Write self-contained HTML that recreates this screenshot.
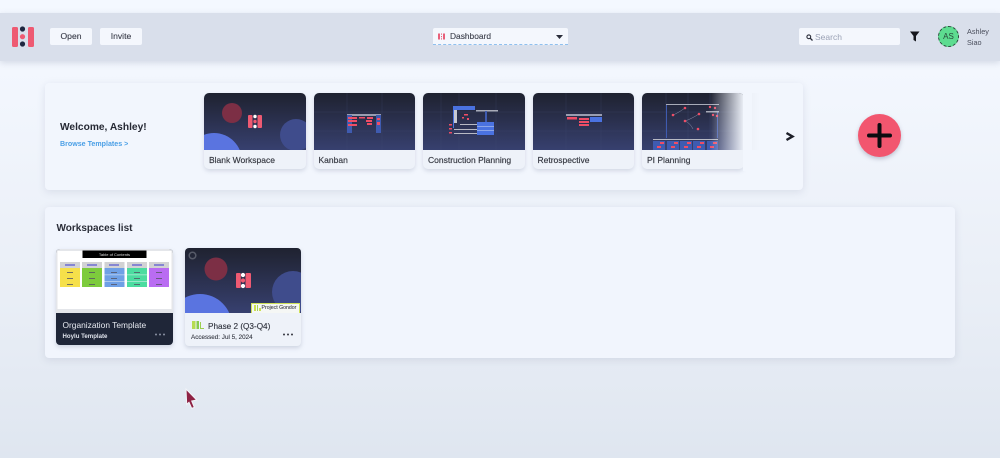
<!DOCTYPE html>
<html><head><meta charset="utf-8"><style>
*{box-sizing:border-box}
html,body{margin:0;padding:0}
body{width:1000px;height:458px;position:relative;overflow:hidden;font-family:"Liberation Sans",sans-serif;color:#2a2d3a;background:linear-gradient(180deg,#f4f8ff 0,#f3f7fe 70px,#e9eef6 300px,#dfe6f0 458px)}
#w{position:absolute;left:0;top:0;width:1000px;height:458px;filter:blur(.35px)}
.a{position:absolute}
.bar{left:0;top:13px;width:1000px;height:48px;background:#d9dfeb;box-shadow:0 2px 6px rgba(120,130,160,.25)}
.btn{top:28px;height:17px;background:#f4f7fd;border-radius:2px;font-size:8.6px;line-height:17px;text-align:center;color:#3a3d4a;-webkit-text-stroke:.12px #3a3d4a}
.panel{background:#f2f6fd;border-radius:4px;box-shadow:0 2px 8px rgba(120,130,160,.18)}
.card{top:93px;width:101.5px;height:76px;border-radius:5px;background:#eef2f9;box-shadow:0 2px 4px rgba(100,110,140,.22);overflow:hidden}
.card svg{position:absolute;left:0;top:0}
.card span{position:absolute;left:5px;top:61px;font-size:8.5px;line-height:12px;color:#33363f;white-space:nowrap;-webkit-text-stroke:.15px #33363f}
</style></head><body><div id="w">
<div class="a bar"></div>

<svg class="a" style="left:11px;top:25px" width="26" height="24" viewBox="0 0 26 24">
<rect x="1" y="2" width="6" height="20" rx="1.500" fill="#ee5a72"/><rect x="17" y="2" width="6" height="20" rx="1.500" fill="#ee5a72"/>
<circle cx="11.500" cy="4" r="2.600" fill="#1f2740"/><circle cx="11.500" cy="11.700" r="2.600" fill="#ee5a72"/><circle cx="11.500" cy="19" r="2.600" fill="#1f2740"/>
</svg>
<div class="a btn" style="left:50px;width:42px">Open</div>
<div class="a btn" style="left:100px;width:42px">Invite</div>

<div class="a" style="left:433px;top:28px;width:135px;height:17px;background:#f4f7fd;border-radius:2px 2px 0 0;border-bottom:1px dashed #8fc0ee;font-size:8.4px;line-height:16px;color:#3d404d;padding-left:17px;-webkit-text-stroke:.12px #3d404d">Dashboard</div>
<svg class="a" style="left:438px;top:33px" width="7" height="7" viewBox="0 0 7 7"><rect x="0" y="0.500" width="2" height="6" fill="#e8607a"/><rect x="5" y="0.500" width="2" height="6" fill="#e8607a"/><rect x="3" y="0.500" width="1" height="1.200" fill="#e8607a"/><rect x="3" y="3" width="1" height="1.200" fill="#e8607a"/><rect x="3" y="5.300" width="1" height="1.200" fill="#e8607a"/></svg>
<svg class="a" style="left:556px;top:35px" width="7" height="4"><path d="M0 0H7L3.500 4Z" fill="#2a2d3a"/></svg>

<div class="a" style="left:799px;top:28px;width:101px;height:17px;background:#f4f7fd;border-radius:2px;font-size:8.500px;line-height:18px;color:#9aa1b5;padding-left:16px">Search</div>
<svg class="a" style="left:806px;top:33.500px" width="7" height="7" viewBox="0 0 7 7"><circle cx="2.800" cy="2.800" r="1.900" fill="none" stroke="#2a2d3a" stroke-width="1.100"/><path d="M4.200 4.200L6.500 6.500" stroke="#2a2d3a" stroke-width="1.300"/></svg>
<svg class="a" style="left:910px;top:31px" width="10" height="11" viewBox="0 0 10 11"><path d="M0 .5H9.500L6 5V10.500L3.500 9V5Z" fill="#15161c"/></svg>
<div class="a" style="left:938px;top:26px;width:21px;height:21px;border-radius:50%;background:#5ddc90;border:1px dashed #2a4a3c;font-size:8px;line-height:19px;text-align:center;color:#27493a">AS</div>
<div class="a" style="left:967px;top:26px;font-size:7.300px;line-height:11px;color:#4a4e5c">Ashley<br>Siao</div>

<div class="a panel" style="left:45px;top:83px;width:758px;height:107px"></div>
<div class="a" style="left:60px;top:121px;font-size:10.200px;font-weight:bold;line-height:14px;color:#262934;white-space:nowrap">Welcome, Ashley!</div>
<div class="a" style="left:60px;top:139px;font-size:7.100px;font-weight:bold;line-height:10px;color:#4a9fe6;white-space:nowrap">Browse Templates &gt;</div>

<div class="a card" style="left:204px">
<svg width="102" height="57" viewBox="0 0 102 57"><defs><linearGradient id="g" x1="0" y1="0" x2="0" y2="1"><stop offset="0" stop-color="#1f2230"/><stop offset="1" stop-color="#37406f"/></linearGradient></defs>
<rect width="102" height="57" fill="url(#g)"/>
<circle cx="28" cy="20" r="10" fill="#7c2f45"/><circle cx="92" cy="42" r="16" fill="#3f4c8c"/><circle cx="10" cy="68" r="28" fill="#5a74e0"/>
<rect x="44" y="22" width="4.500" height="13" rx="1" fill="#ee5a72"/><rect x="53.500" y="22" width="4.500" height="13" rx="1" fill="#ee5a72"/><circle cx="51" cy="23.500" r="1.700" fill="#fff"/><circle cx="51" cy="28.500" r="1.700" fill="#ee5a72"/><circle cx="51" cy="33.500" r="1.700" fill="#fff"/></svg>
<span>Blank Workspace</span></div>

<div class="a card" style="left:313.500px">
<svg width="102" height="57" viewBox="0 0 102 57"><rect width="102" height="57" fill="url(#g)"/>
<g stroke="#46507a" stroke-width=".4" opacity=".5"><path d="M33 0V57M68 0V57M0 19H102M0 38H102"/></g>
<rect x="33" y="21" width="34" height="2" fill="#999db0"/><rect x="33" y="22" width="5" height="18" fill="#3f5bb0"/><rect x="62" y="22" width="5" height="18" fill="#3f5bb0"/>
<g fill="#ee4d66"><rect x="34" y="24" width="9" height="2"/><rect x="34" y="27" width="9" height="2"/><rect x="34" y="31" width="9" height="2"/><rect x="45" y="24" width="6" height="1.500"/><rect x="53" y="24" width="6" height="2"/><rect x="52" y="27" width="6" height="2"/><rect x="53" y="30" width="5" height="2"/><rect x="63" y="25" width="3" height="2"/><rect x="63" y="29" width="3" height="3"/></g></svg>
<span>Kanban</span></div>

<div class="a card" style="left:423px">
<svg width="102" height="57" viewBox="0 0 102 57"><rect width="102" height="57" fill="url(#g)"/>
<g stroke="#46507a" stroke-width=".4" opacity=".5"><path d="M18 0V57M36 0V57M73 0V57M0 19H102M0 38H102"/></g>
<rect x="30" y="13" width="22" height="4" fill="#4a72e0"/><rect x="30" y="17" width="4" height="13" fill="#c8cad2"/><rect x="30" y="13" width="1" height="22" fill="#4a72e0"/>
<rect x="53" y="17" width="22" height="1.500" fill="#a8abb8"/><rect x="62" y="18" width="2" height="13" fill="#3f5bb0"/>
<g fill="#ee4d66"><rect x="41" y="21" width="4" height="1.500"/><rect x="39" y="24" width="2" height="1.500"/><rect x="44" y="25" width="2" height="2"/><rect x="26" y="31" width="3" height="1.500"/><rect x="26" y="35" width="3" height="1.500"/><rect x="26" y="39" width="3" height="1.500"/></g>
<rect x="37" y="31" width="27" height="1" fill="#b8bac4"/><rect x="31" y="36" width="33" height="1" fill="#b8bac4"/><rect x="31" y="40" width="33" height="1" fill="#b8bac4"/>
<rect x="54" y="29" width="17" height="13" fill="#4a72e0"/><g fill="#a9bbec"><rect x="54" y="33" width="17" height=".7"/><rect x="54" y="37" width="17" height=".7"/></g></svg>
<span>Construction Planning</span></div>

<div class="a card" style="left:532.500px">
<svg width="102" height="57" viewBox="0 0 102 57"><rect width="102" height="57" fill="url(#g)"/>
<g stroke="#46507a" stroke-width=".4" opacity=".5"><path d="M33 0V57M68 0V57M0 19H102M0 38H102"/></g>
<rect x="33" y="21" width="36" height="2" fill="#999db0"/>
<g fill="#ee4d66"><rect x="34" y="24" width="10" height="2.500"/><rect x="46" y="25" width="10" height="2"/><rect x="46" y="28" width="10" height="2"/><rect x="46" y="31" width="10" height="2"/></g>
<rect x="57" y="24" width="12" height="5" fill="#4a72e0"/></svg>
<span>Retrospective</span></div>

<div class="a card" style="left:642px">
<svg width="102" height="57" viewBox="0 0 102 57"><defs><linearGradient id="f" x1="0" x2="1" y1="0" y2="0"><stop offset="0" stop-color="#eef2f9" stop-opacity="0"/><stop offset="1" stop-color="#eef2f9"/></linearGradient></defs><rect width="102" height="57" fill="url(#g)"/>
<g stroke="#4a5582" stroke-width=".4" opacity=".6"><path d="M24 0V57M46 0V57M68 0V57M0 19H102M0 38H102"/></g>
<rect x="24" y="11" width="53" height="1" fill="#a8abb8"/><rect x="24" y="12" width="1" height="33" fill="#3f5bb0"/><rect x="75" y="19" width="1" height="26" fill="#3f5bb0"/><rect x="64" y="18" width="13" height="1.500" fill="#a8abb8"/>
<path d="M31 22Q36 20 43 15M43 28Q48 30 51 36M43 28Q49 26 57 21" fill="none" stroke="#8a90aa" stroke-width=".5"/>
<g fill="#ee4d66"><circle cx="31" cy="22" r="1.300"/><circle cx="43" cy="15" r="1.300"/><circle cx="43" cy="28" r="1.300"/><circle cx="57" cy="21" r="1.300"/><circle cx="56" cy="36" r="1.300"/><circle cx="68" cy="14" r="1.200"/><circle cx="73" cy="15" r="1.200"/><circle cx="71" cy="22" r="1.200"/><circle cx="75" cy="23" r="1.200"/></g>
<rect x="11" y="46" width="65" height="1" fill="#b8bac4"/>
<g fill="#3f5bb0"><rect x="11" y="48" width="12" height="9"/><rect x="25" y="48" width="12" height="9"/><rect x="38" y="48" width="12" height="9"/><rect x="51" y="48" width="12" height="9"/><rect x="65" y="48" width="11" height="9"/></g>
<g fill="#ee4d66"><rect x="18" y="49" width="4" height="2"/><rect x="32" y="49" width="4" height="2"/><rect x="45" y="49" width="4" height="2"/><rect x="58" y="49" width="4" height="2"/><rect x="71" y="49" width="4" height="2"/><rect x="15" y="53" width="4" height="2"/><rect x="29" y="53" width="4" height="2"/><rect x="42" y="53" width="4" height="2"/><rect x="55" y="53" width="4" height="2"/><rect x="68" y="53" width="4" height="2"/></g>
<rect x="68" width="34" height="57" fill="url(#f)"/></svg>
<span>PI Planning</span></div>
<div class="a" style="left:743px;top:93px;width:9px;height:78px;background:#f2f6fd"></div>
<div class="a" style="left:752px;top:93px;width:8px;height:57px;background:linear-gradient(90deg,#eef2f9,#f2f6fd)"></div>

<svg class="a" style="left:785px;top:131px" width="10" height="11" viewBox="0 0 10 11"><path d="M1.500 2L7.500 5.500L1.500 9" fill="none" stroke="#1d1f28" stroke-width="2.400"/></svg>

<div class="a" style="left:858px;top:114px;width:43px;height:43px;border-radius:50%;background:#f2566f;box-shadow:0 2px 4px rgba(100,100,130,.35)"></div>
<svg class="a" style="left:867px;top:123px" width="25" height="25" viewBox="0 0 25 25"><path d="M12.500 2V23M2 12.500H23" stroke="#0c0c10" stroke-width="4" stroke-linecap="round"/></svg>

<div class="a panel" style="left:45px;top:207px;width:910px;height:151px;background:#f1f5fd"></div>
<div class="a" style="left:56.500px;top:222px;font-size:10px;font-weight:bold;line-height:14px;color:#2a2d38;white-space:nowrap">Workspaces list</div>

<div class="a" style="left:56px;top:249px;width:117px;height:96px;border-radius:4px;background:#1f2638;box-shadow:0 2px 4px rgba(100,110,140,.25);overflow:hidden">
<svg class="a" style="left:0;top:0" width="117" height="64" viewBox="0 0 117 64"><rect width="117" height="64" fill="#e4e6ea"/><rect x="1.500" y="2" width="114" height="58" fill="#fff"/>
<rect x="26.500" y="1.500" width="64" height="7.500" fill="#000"/>
<text x="58.500" y="7" font-size="4" fill="#ddd" text-anchor="middle" font-family="Liberation Sans">Table of Contents</text>
<g fill="#d2d2d4"><rect x="4" y="13" width="20" height="6"/><rect x="26" y="13" width="20" height="6"/><rect x="48.500" y="13" width="20" height="6"/><rect x="71" y="13" width="20" height="6"/><rect x="93" y="13" width="20" height="6"/></g>
<rect x="4" y="19" width="20" height="19" fill="#f6e04a"/><rect x="26" y="19" width="20" height="19" fill="#7dcb3c"/><rect x="48.500" y="19" width="20" height="19" fill="#6fa0e6"/><rect x="71" y="19" width="20" height="19" fill="#4cdca0"/><rect x="93" y="19" width="20" height="19" fill="#b96cf2"/>
<g fill="#3a3ad0"><rect x="9" y="15.500" width="10" height="1"/><rect x="31" y="15.500" width="10" height="1"/><rect x="53" y="15.500" width="10" height="1"/><rect x="76" y="15.500" width="10" height="1"/><rect x="98" y="15.500" width="10" height="1"/></g>
<g fill="#556" opacity=".8"><rect x="11" y="23" width="6" height="1"/><rect x="11" y="29" width="6" height="1"/><rect x="11" y="35" width="6" height="1"/><rect x="33" y="23" width="6" height="1"/><rect x="33" y="29" width="6" height="1"/><rect x="33" y="35" width="6" height="1"/><rect x="55" y="23" width="6" height="1"/><rect x="55" y="29" width="6" height="1"/><rect x="55" y="35" width="6" height="1"/><rect x="78" y="23" width="6" height="1"/><rect x="78" y="29" width="6" height="1"/><rect x="78" y="35" width="6" height="1"/><rect x="100" y="23" width="6" height="1"/><rect x="100" y="29" width="6" height="1"/><rect x="100" y="35" width="6" height="1"/></g>
<g fill="#eef2f6" opacity=".7"><rect x="48.500" y="25.500" width="20" height=".7"/><rect x="48.500" y="32" width="20" height=".7"/><rect x="71" y="25.500" width="20" height=".7"/><rect x="71" y="32" width="20" height=".7"/></g></svg>
<div class="a" style="left:6.500px;top:70px;font-size:8.400px;line-height:12px;color:#e6e9f0;white-space:nowrap">Organization Template</div>
<div class="a" style="left:6.500px;top:83px;font-size:6.100px;font-weight:bold;line-height:9px;color:#dfe3ec;white-space:nowrap">Hoylu Template</div>
<svg class="a" style="left:99px;top:84px" width="10" height="3"><g fill="#8a90a2"><circle cx="1" cy="1.500" r="1"/><circle cx="5" cy="1.500" r="1"/><circle cx="9" cy="1.500" r="1"/></g></svg>
</div>

<div class="a" style="left:185px;top:248px;width:116px;height:98px;border-radius:4px;background:#eef2f9;box-shadow:0 2px 4px rgba(100,110,140,.25);overflow:hidden">
<svg class="a" style="left:0;top:0" width="116" height="65" viewBox="0 0 116 65"><rect width="116" height="65" fill="url(#g)"/>
<circle cx="7.500" cy="7.500" r="3.300" fill="none" stroke="#565a68" stroke-width="1.500"/>
<circle cx="31" cy="21" r="11.500" fill="#7c2f45"/><circle cx="108" cy="44" r="21" fill="#3f4c8c"/><circle cx="15" cy="78" r="32" fill="#5a74e0"/>
<rect x="51" y="25" width="4.800" height="15" rx="1" fill="#ee5a72"/><rect x="60.500" y="25" width="5.500" height="15" rx="1" fill="#ee5a72"/><circle cx="58" cy="27" r="2.100" fill="#fff"/><circle cx="58" cy="32.500" r="2.100" fill="#ee5a72"/><circle cx="58" cy="38" r="2.100" fill="#fff"/></svg>
<div class="a" style="left:66px;top:55px;width:49px;height:10px;background:#f5f7f5;border:1px solid #cfe05a;border-bottom:none;font-size:5.200px;line-height:9px;padding-left:9.500px;color:#3a3d48;white-space:nowrap;overflow:hidden;-webkit-text-stroke:.1px #3a3d48">Project Gondor</div>
<svg class="a" style="left:69px;top:57px" width="7" height="6"><rect width="2" height="6" fill="#cbe04f"/><rect x="3" width="1" height="6" fill="#a7cf5a"/><rect x="5" y="3" width="2" height="3" fill="#cbe04f"/></svg>
<svg class="a" style="left:7px;top:73px" width="12" height="9"><rect width="3.500" height="8" fill="#b6dc52"/><rect x="4.500" width="2.500" height="8" fill="#88cb4e"/><rect x="8" y="1" width="1" height="7" fill="#9ccf50"/><rect x="8" y="7" width="4" height="1" fill="#9ccf50"/></svg>
<div class="a" style="left:23px;top:72.500px;font-size:8.200px;line-height:12px;color:#2c2f3a;white-space:nowrap;-webkit-text-stroke:.12px #2c2f3a">Phase 2 (Q3-Q4)</div>
<div class="a" style="left:6px;top:85px;font-size:6.300px;line-height:9px;color:#2f323c;white-space:nowrap;-webkit-text-stroke:.08px #2f323c">Accessed: Jul 5, 2024</div>
<svg class="a" style="left:98px;top:85px" width="10" height="3"><g fill="#33363f"><circle cx="1" cy="1.500" r="1"/><circle cx="5" cy="1.500" r="1"/><circle cx="9" cy="1.500" r="1"/></g></svg>
</div>

<svg class="a" style="left:183px;top:387px" width="16" height="24" viewBox="0 0 16 24"><path d="M3 2L13.700 13L8.700 14L11.300 20.300L8.700 21.300L6 15.300L3.700 17.300Z" fill="#8e2244" stroke="#f2f4f8" stroke-width="1"/></svg>
</div></body></html>
